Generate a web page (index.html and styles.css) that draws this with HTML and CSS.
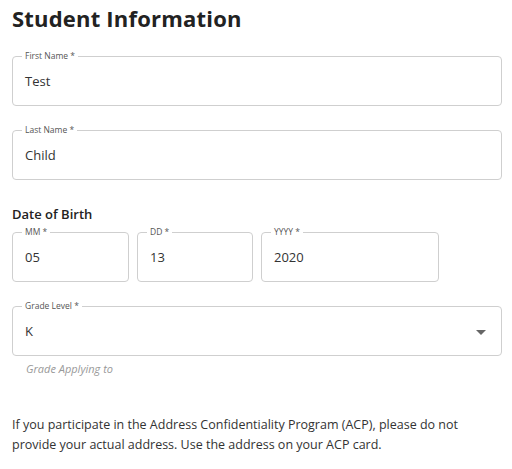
FILE: index.html
```html
<!DOCTYPE html>
<html>
<head>
<meta charset="utf-8">
<link rel="stylesheet" href="styles.css">
</head>
<body>
<div class="page">
  <h1 class="title">Student Information</h1>
  <div class="field name-first">
    <span class="label">First Name *</span>
    <span class="value">Test</span>
  </div>
  <div class="field name-last">
    <span class="label">Last Name *</span>
    <span class="value">Child</span>
  </div>
  <div class="dob-title">Date of Birth</div>
  <div class="dob">
    <div class="field">
      <span class="label">MM *</span>
      <span class="value">05</span>
    </div>
    <div class="field">
      <span class="label">DD *</span>
      <span class="value">13</span>
    </div>
    <div class="field">
      <span class="label">YYYY *</span>
      <span class="value">2020</span>
    </div>
  </div>
  <div class="field select">
    <span class="label">Grade Level *</span>
    <span class="value">K</span>
    <span class="arrow"></span>
  </div>
  <div class="helper">Grade Applying to</div>
  <p class="note">If you participate in the Address Confidentiality Program (ACP), please do not provide your actual address. Use the address on your ACP card.</p>
</div>
</body>
</html>
```
FILE: styles.css
```css
html, body {
  margin: 0;
  padding: 0;
  background: #fff;
}
.page {
  width: 490px;
  padding: 0 10px 0 12px;
  font-family: "Open Sans", "Liberation Sans", sans-serif;
  color: #333;
}
.title {
  margin: 0;
  padding-top: 3px;
  font-size: 22px;
  line-height: 30px;
  font-weight: 700;
  color: #222;
  letter-spacing: 0.2px;
}
.field {
  position: relative;
  box-sizing: border-box;
  height: 50px;
  border: 1px solid #cfcfcf;
  border-radius: 4px;
  display: flex;
  align-items: center;
  padding: 0 12px;
}
.name-first {
  margin-top: 23px;
}
.name-last {
  margin-top: 24px;
}
.label {
  position: absolute;
  top: -7px;
  left: 9px;
  padding: 0 3px;
  background: #fff;
  font-size: 8.5px;
  line-height: 12px;
  color: #555;
}
.value {
  font-size: 13px;
  color: #333;
}
.dob-title {
  margin-top: 25px;
  font-size: 13px;
  line-height: 18px;
  font-weight: 600;
  color: #222;
}
.dob {
  margin-top: 9px;
  display: grid;
  grid-template-columns: 117px 116px 178px;
  column-gap: 8px;
}
.dob .field {
  height: 50px;
}
.select {
  margin-top: 24px;
}
.arrow {
  position: absolute;
  right: 15px;
  top: 23px;
  width: 0;
  height: 0;
  border-left: 5px solid transparent;
  border-right: 5px solid transparent;
  border-top: 5px solid #666;
}
.helper {
  margin-top: 5px;
  padding-left: 14px;
  font-size: 11px;
  line-height: 16px;
  font-style: italic;
  color: #999;
}
.note {
  margin: 38px 0 0;
  font-size: 12.5px;
  line-height: 20px;
  color: #333;
}
```
